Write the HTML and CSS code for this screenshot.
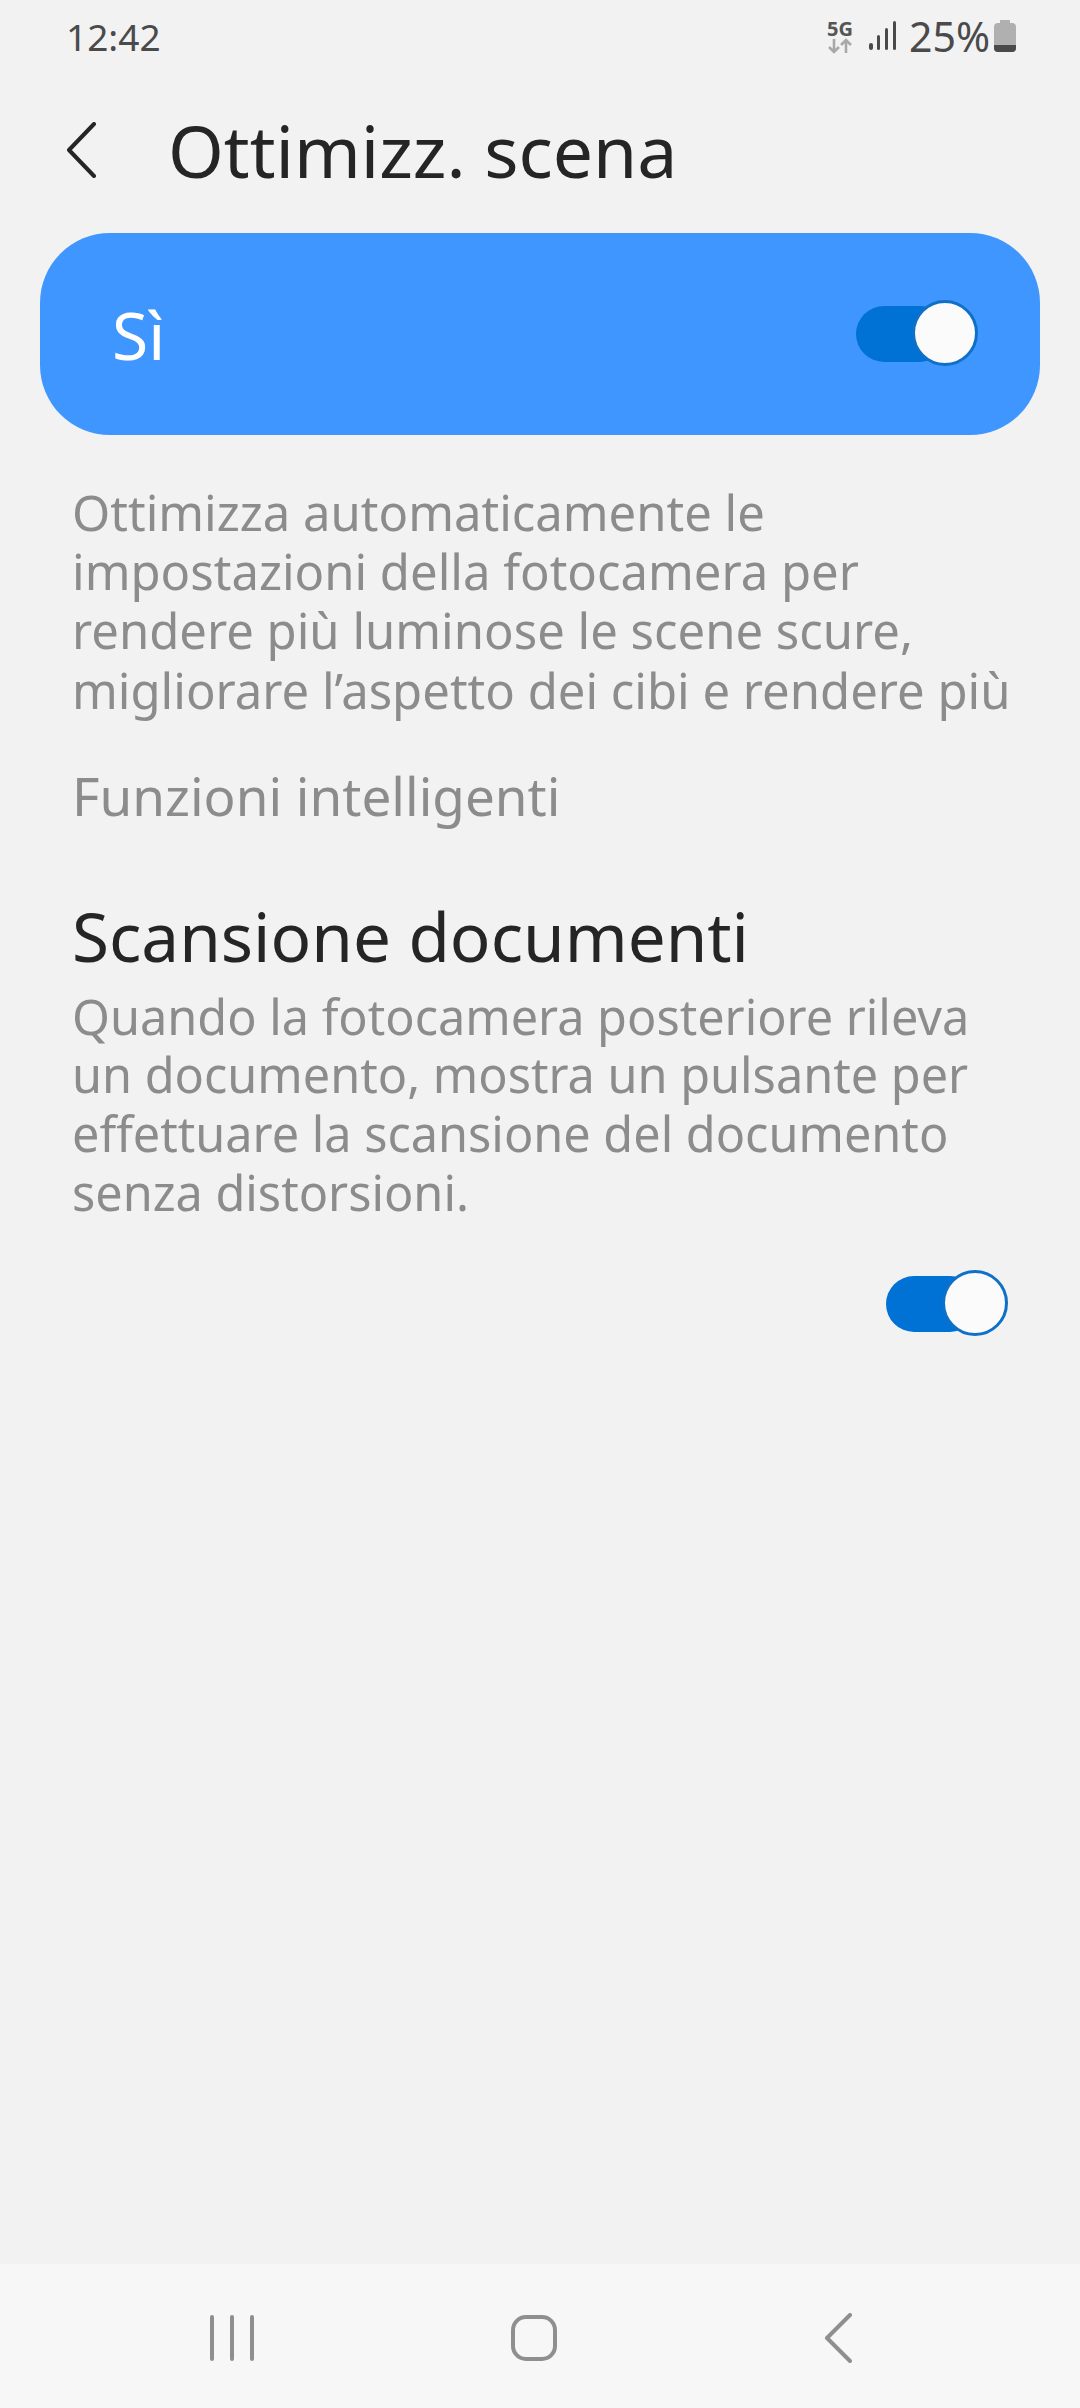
FILE: index.html
```html
<!DOCTYPE html>
<html lang="it">
<head>
  <meta charset="UTF-8" />
  <title>Ottimizz. scena</title>
  <link rel="stylesheet" href="styles.css">
</head>
<body>
  <div class="status-bar">
    <span class="clock">12:42</span>
    <div class="status-icons">
      <div class="net-5g">
        <span class="net-label">5G</span>
        <svg class="net-arrows" width="24" height="16" viewBox="0 0 24 16" fill="none" stroke="#a8a8a8" stroke-width="2.6">
          <path d="M6 1v13M1 9l5 5 5-5M18 15V2M13 7l5-5 5 5"/>
        </svg>
      </div>
      <svg class="signal" width="28" height="30" viewBox="0 0 28 30" fill="#4a4a4a">
        <rect x="0" y="22" width="4" height="7" rx="2"/>
        <rect x="8" y="14" width="3" height="15" rx="1.5"/>
        <rect x="16" y="7" width="3" height="22" rx="1.5"/>
        <rect x="24" y="0" width="3" height="29" rx="1.5"/>
      </svg>
      <span class="battery-pct">25%</span>
      <svg class="battery" width="22" height="32" viewBox="0 0 22 32">
        <path d="M6 0h10v3h2a4 4 0 0 1 4 4v21a4 4 0 0 1-4 4H4a4 4 0 0 1-4-4V7a4 4 0 0 1 4-4h2z" fill="#b0b0b0"/>
        <path d="M0 25h22v3a4 4 0 0 1-4 4H4a4 4 0 0 1-4-4z" fill="#4a4a4a"/>
      </svg>
    </div>
  </div>

  <div class="app-bar">
    <svg class="back" width="32" height="56" viewBox="0 0 32 56" fill="none" stroke="#252525" stroke-width="4" stroke-linecap="round" stroke-linejoin="round">
      <path d="M28 2L3 28l25 26"/>
    </svg>
    <h1>Ottimizz. scena</h1>
  </div>

  <div class="master-card">
    <span>Sì</span>
    <div class="toggle on-card"><div class="knob"></div></div>
  </div>

  <p class="desc intro">Ottimizza automaticamente le impostazioni della fotocamera per rendere più luminose le scene scure, migliorare l’aspetto dei cibi e rendere più</p>

  <div class="section-title">Funzioni intelligenti</div>

  <div class="feature">
    <h2>Scansione documenti</h2>
    <p class="desc">Quando la fotocamera posteriore rileva un documento, mostra un pulsante per effettuare la scansione del documento senza distorsioni.</p>
    <div class="feature-toggle">
      <div class="toggle"><div class="knob"></div></div>
    </div>
  </div>

  <div class="nav-bar">
    <svg width="46" height="46" viewBox="0 0 46 46" fill="#8f8f8f">
      <rect x="1" y="0" width="4" height="46" rx="2"/>
      <rect x="21" y="0" width="4" height="46" rx="2"/>
      <rect x="41" y="0" width="4" height="46" rx="2"/>
    </svg>
    <svg width="46" height="46" viewBox="0 0 46 46" fill="none" stroke="#8f8f8f" stroke-width="4">
      <rect x="2" y="2" width="42" height="42" rx="13"/>
    </svg>
    <svg class="nav-back" width="28" height="50" viewBox="0 0 28 50" fill="none" stroke="#8f8f8f" stroke-width="4" stroke-linecap="round" stroke-linejoin="round">
      <path d="M26 2L3 25l23 23"/>
    </svg>
  </div>
</body>
</html>
```

FILE: styles.css
```css
html, body { height: 100%; }
body { margin: 0; width: 1080px; height: 2408px; display: flex; flex-direction: column; background: #f2f2f2; font-family: "Noto Sans", sans-serif; overflow: hidden; }
h1, h2, p { margin: 0; font-weight: 400; }

.status-bar { display: flex; justify-content: space-between; align-items: center; height: 72px; padding: 0 64px 0 66px; color: #4a4a4a; }
.clock { font-size: 37px; }
.status-icons { display: flex; align-items: center; }
.net-5g { display: flex; flex-direction: column; align-items: center; width: 26px; margin-right: 16px; }
.net-label { font-size: 20px; font-weight: 700; line-height: 19px; color: #555; }
.net-arrows { display: block; }
.signal { margin-right: 12px; }
.battery-pct { font-size: 41px; line-height: 48px; margin-right: 4px; }

.app-bar { display: flex; align-items: center; height: 156px; padding-left: 66px; box-sizing: border-box; }
.back { margin-right: 70px; }
.app-bar h1 { font-size: 71.5px; color: #252525; }

.master-card { display: flex; justify-content: space-between; align-items: center; height: 202px; margin: 5px 40px 0; padding: 0 62px 0 72px; border-radius: 70px; background: #4096ff; color: #fff; font-size: 66px; }

.toggle { position: relative; width: 92px; height: 56px; margin-right: 30px; border-radius: 28px; background: #0072d6; }
.knob { position: absolute; top: -6px; right: -30px; width: 60px; height: 60px; border: 3px solid #0f70c8; border-radius: 50%; background: #fbfbfb; }

.desc { padding: 0 72px; font-size: 49px; color: #8c8c8c; }
.intro { margin-top: 48px; padding-right: 40px; line-height: 59.2px; }
.section-title { margin-top: 46px; font-size: 53px; line-height: 60px; padding-left: 72px; color: #8c8c8c; }

.feature { margin-top: 70px; }
.feature h2 { padding-left: 72px; font-size: 67.4px; line-height: 80px; color: #252525; }
.feature .desc { margin-top: 11px; font-size: 48.6px; line-height: 58.6px; }
.feature-toggle { display: flex; justify-content: flex-end; margin-top: 55px; padding-right: 72px; }

.nav-bar { display: flex; align-items: center; gap: 256px; height: 144px; margin-top: auto; padding: 3px 0 0 209px; box-sizing: border-box; background: #f7f7f7; }
.nav-back { margin-left: 11px; }
```
